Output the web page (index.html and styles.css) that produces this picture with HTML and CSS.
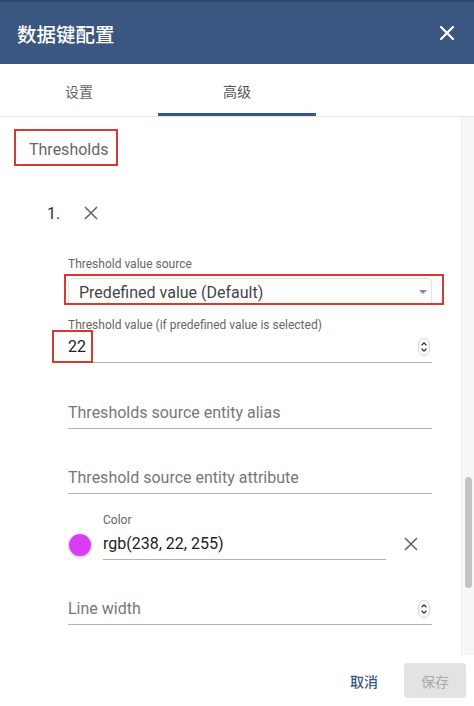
FILE: index.html
```html
<!DOCTYPE html>
<html lang="zh">
<head>
<meta charset="utf-8">
<link rel="stylesheet" href="styles.css">
</head>
<body>
<div class="dialog">
  <div class="header">
    <div class="title">数据键配置</div>
    <svg class="close" width="14" height="14" viewBox="0 0 14 14"><path d="M1 1L13 13M13 1L1 13" stroke="#fff" stroke-width="2.2" stroke-linecap="square"/></svg>
  </div>
  <div class="tabs">
    <div class="tab">设置</div>
    <div class="tab active">高级</div>
  </div>
  <div class="body">
    <div class="content">
      <div class="section-title">Thresholds</div>
      <div class="item-row">
        <span class="num">1.</span>
        <svg class="item-x" width="14" height="14" viewBox="0 0 14 14"><path d="M1 1L13 13M13 1L1 13" stroke="#666" stroke-width="1.6"/></svg>
      </div>
      <div class="field f-source">
        <div class="label">Threshold value source</div>
        <div class="mark-select">
          <div class="select">
            <span>Predefined value (Default)</span>
            <svg width="8" height="4" viewBox="0 0 8 4"><path d="M0 0H8L4 4Z" fill="#8a8a8a"/></svg>
          </div>
        </div>
      </div>
      <div class="field f-value">
        <div class="label">Threshold value (if predefined value is selected)</div>
        <div class="input">
          <span class="val marked">22</span>
          <svg class="spin" width="12" height="18" viewBox="0 0 12 18"><rect x="0.5" y="0.5" width="11" height="17" rx="5.5" fill="none" stroke="#d6d6d6"/><path d="M3.6 7.2L6 4.8L8.4 7.2M3.6 10.8L6 13.2L8.4 10.8" fill="none" stroke="#333" stroke-width="1.3"/></svg>
        </div>
      </div>
      <div class="field f-alias">
        <div class="input"><span class="ph">Thresholds source entity alias</span></div>
      </div>
      <div class="field f-attr">
        <div class="input"><span class="ph">Threshold source entity attribute</span></div>
      </div>
      <div class="color-row">
        <span class="swatch"></span>
        <div class="color-field">
          <div class="label">Color</div>
          <div class="input"><span class="val">rgb(238, 22, 255)</span></div>
        </div>
        <svg class="color-x" width="14" height="14" viewBox="0 0 14 14"><path d="M1 1L13 13M13 1L1 13" stroke="#666" stroke-width="1.6"/></svg>
      </div>
      <div class="field f-width">
        <div class="input">
          <span class="ph">Line width</span>
          <svg class="spin" width="12" height="18" viewBox="0 0 12 18"><rect x="0.5" y="0.5" width="11" height="17" rx="5.5" fill="none" stroke="#d6d6d6"/><path d="M3.6 7.2L6 4.8L8.4 7.2M3.6 10.8L6 13.2L8.4 10.8" fill="none" stroke="#333" stroke-width="1.3"/></svg>
        </div>
      </div>
    </div>
    <div class="scrollbar"><div class="thumb"></div></div>
  </div>
  <div class="footer">
    <button class="btn-cancel">取消</button>
    <button class="btn-save">保存</button>
  </div>
</div>
</body>
</html>
```

FILE: styles.css
```css
* { box-sizing: border-box; }
html, body { margin: 0; padding: 0; }
body {
  width: 474px;
  height: 706px;
  font-family: Roboto, "Noto Sans CJK SC", sans-serif;
  background: #fff;
  overflow: hidden;
}
.dialog {
  display: flex;
  flex-direction: column;
  height: 706px;
}
.header {
  height: 64px;
  flex: none;
  background: #3a5781;
  border-top: 2px solid #2e4668;
  padding: 0 20px 0 17px;
  display: flex;
  align-items: center;
  justify-content: space-between;
}
.title {
  color: #fff;
  font-family: "Noto Sans CJK SC", sans-serif;
  font-size: 19.5px;
  font-weight: 500;
}
.close { display: block; }
.tabs {
  height: 53px;
  flex: none;
  display: flex;
  border-bottom: 1px solid #e6e6e6;
}
.tab {
  width: 158px;
  display: flex;
  align-items: center;
  justify-content: center;
  font-family: "Noto Sans CJK SC", sans-serif;
  font-size: 14px;
  color: #666;
  border-bottom: 3px solid transparent;
  padding-top: 4px;
}
.tab.active {
  border-bottom-color: #3a5781;
  color: #555;
}
.body {
  flex: 1;
  display: flex;
  min-height: 0;
}
.content {
  flex: 1;
  overflow: hidden;
  padding-top: 12px;
}
.scrollbar {
  width: 13px;
  flex: none;
  background: #f7f7f7;
  border-left: 1px solid #eeeeee;
  padding: 360px 2px 0 2px;
}
.thumb {
  width: 7px;
  height: 111px;
  margin-left: 1px;
  background: #c3c3c3;
  border-radius: 4px;
}
.section-title {
  margin-left: 14px;
  width: 104px;
  height: 37px;
  border: 2px solid #d63a2e;
  padding: 5px 0 0 13px;
  line-height: 28px;
  font-size: 16px;
  color: #666;
}
.item-row {
  margin-top: 35px;
  height: 24px;
  display: flex;
  align-items: center;
  padding-left: 47px;
}
.num {
  font-size: 16px;
  color: #333;
  width: 37px;
}
.item-x { display: block; }
.field {
  margin-left: 68px;
  width: 364px;
}
.label {
  font-size: 12px;
  line-height: 14px;
  color: #666;
}
.f-source { margin-top: 32px; }
.mark-select {
  margin: 3px -12px 0 -4px;
  border: 2px solid #d63a2e;
  padding: 2px 10px 0 2px;
}
.select {
  height: 25px;
  border: 1px solid #e2e2e2;
  border-bottom: none;
  border-radius: 5px 5px 0 0;
  display: flex;
  align-items: center;
  justify-content: space-between;
  padding: 2px 4px 0 10px;
  font-size: 16px;
  color: #444;
}
.f-value { margin-top: 13px; }
.f-value .label { margin-bottom: 2px; }
.input {
  height: 29px;
  border-bottom: 1px solid #b4b4b4;
  display: flex;
  align-items: center;
  justify-content: space-between;
  font-size: 16px;
  padding-bottom: 3px;
}
.val { color: #222; position: relative; }
.ph { color: #777; }
.marked::before {
  content: "";
  position: absolute;
  left: -16px;
  top: -7px;
  width: 37px;
  height: 29px;
  border: 2px solid #d63a2e;
}
.spin { display: block; margin-right: 2px; }
.f-alias { margin-top: 37px; }
.f-attr { margin-top: 36px; }
.color-row {
  margin-top: 19px;
  margin-left: 68px;
  display: flex;
  align-items: flex-end;
}
.swatch {
  width: 22px;
  height: 22px;
  border-radius: 50%;
  background: #d93cf5;
  box-shadow: 0 1px 3px rgba(0,0,0,0.3);
  margin: 0 12px 4px 1px;
  flex: none;
}
.color-field { width: 283px; }
.color-field .label { margin-bottom: 4px; }
.color-x { display: block; margin: 0 0 9px 18px; }
.f-width { margin-top: 36px; }
.footer {
  height: 51px;
  flex: none;
  display: flex;
  align-items: center;
  justify-content: flex-end;
  padding-right: 8px;
  gap: 26px;
}
.btn-cancel {
  border: none;
  background: none;
  padding: 0;
  font-family: "Noto Sans CJK SC", sans-serif;
  font-size: 14px;
  font-weight: 500;
  color: #3a5781;
}
.btn-save {
  border: none;
  width: 62px;
  height: 35px;
  border-radius: 4px;
  background: #e3e3e3;
  color: #a9a9a9;
  font-family: "Noto Sans CJK SC", sans-serif;
  font-size: 14px;
}
```
